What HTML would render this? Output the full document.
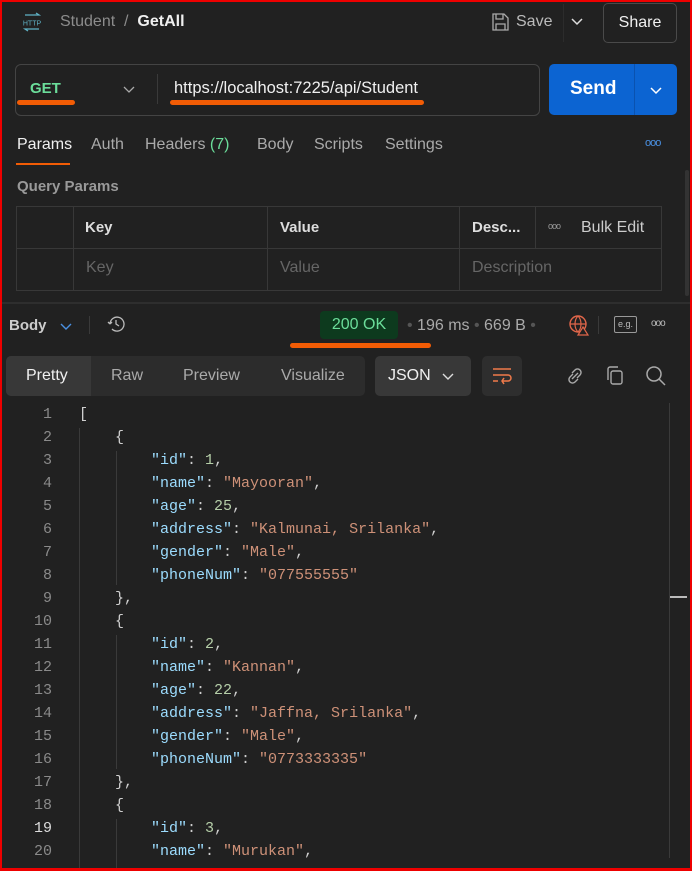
<!DOCTYPE html>
<html><head><meta charset="utf-8"><style>
*{box-sizing:border-box;margin:0;padding:0}
body{width:692px;height:871px;background:#212121;overflow:hidden;position:relative;font-family:"Liberation Sans",sans-serif;color:#e6e6e6}
.frame{position:absolute;inset:0;border:2px solid #e00;border-bottom-width:3px;z-index:10;pointer-events:none}
.a{position:absolute;white-space:nowrap}
.t{font-size:16px}
.code{position:absolute;left:0;top:403px;font-family:"Liberation Mono",monospace;font-size:15px;line-height:23px}
.ln{position:absolute;left:0;width:52px;text-align:right;color:#8a8a8a}
.cl{position:absolute;left:79px;white-space:pre;color:#cfcfcf}
.k{color:#9cdcfe}.s{color:#ce9178}.n{color:#b5cea8}
</style></head><body>
<div class="frame"></div>
<div class="a" style="left:21px;top:12px;width:22px;height:20px">
<svg width="22" height="20"><path d="M4 3h14l-3-2M18 17H4l3 2" stroke="#5fb3c6" fill="none" stroke-width="1.3"/><text x="11" y="13.5" font-size="7" fill="#5fb3c6" text-anchor="middle" font-family="Liberation Sans">HTTP</text></svg></div>
<div class="a" style="left:60px;top:13px;color:#8c8c8c;font-size:16px">Student&nbsp; /&nbsp; <b style="color:#f0f0f0">GetAll</b></div>
<div class="a" style="left:490px;top:12px"><svg width="20" height="20"><path d="M3 2h11l4 4v12H3z M6 2v5h7V2 M6 18v-6h9v6" stroke="#aaa" fill="none" stroke-width="1.3"/></svg></div>
<div class="a t" style="left:516px;top:13px;color:#bbb">Save</div>
<div class="a" style="left:563px;top:4px;width:1px;height:38px;background:#2c2c2c"></div>
<div class="a" style="left:570px;top:13px"><svg width="14" height="10"><path d="M2 3l5 5 5-5" stroke="#ddd" fill="none" stroke-width="1.5"/></svg></div>
<div class="a" style="left:603px;top:3px;width:74px;height:40px;border:1px solid #4a4a4a;border-radius:5px;text-align:center;line-height:38px;font-size:16px;color:#f0f0f0">Share</div>
<div class="a" style="left:15px;top:64px;width:525px;height:52px;border:1px solid #444;border-radius:6px"></div>
<div class="a" style="left:30px;top:80px;color:#6bdd9a;font-weight:bold;font-size:15px">GET</div>
<div class="a" style="left:17px;top:100px;width:58px;height:5px;background:#f25c05;border-radius:3px"></div>
<div class="a" style="left:122px;top:82px"><svg width="14" height="10"><path d="M2 2l5 5 5-5" stroke="#aaa" fill="none" stroke-width="1.3"/></svg></div>
<div class="a" style="left:157px;top:74px;width:1px;height:30px;background:#3a3a3a"></div>
<div class="a" style="left:174px;top:79px;font-size:16.5px;color:#f0f0f0">https://localhost:7225/api/Student</div>
<div class="a" style="left:170px;top:100px;width:254px;height:5px;background:#f25c05;border-radius:3px"></div>
<div class="a" style="left:549px;top:64px;width:128px;height:51px;background:#0c64d2;border-radius:5px"></div>
<div class="a" style="left:634px;top:64px;width:1px;height:51px;background:#0a52b0"></div>
<div class="a" style="left:570px;top:78px;font-size:19px;font-weight:bold;color:#fff">Send</div>
<div class="a" style="left:649px;top:83px"><svg width="14" height="10"><path d="M2 2l5 5 5-5" stroke="#fff" fill="none" stroke-width="1.5"/></svg></div>
<div class="a t" style="left:17px;top:136px;color:#f0f0f0">Params</div>
<div class="a" style="left:16px;top:163px;width:54px;height:2px;background:#f25c05"></div>
<div class="a t" style="left:91px;top:136px;color:#aaa">Auth</div>
<div class="a t" style="left:145px;top:136px;color:#aaa">Headers <span style="color:#6bdd9a">(7)</span></div>
<div class="a t" style="left:257px;top:136px;color:#aaa">Body</div>
<div class="a t" style="left:314px;top:136px;color:#aaa">Scripts</div>
<div class="a t" style="left:385px;top:136px;color:#aaa">Settings</div>
<div class="a" style="left:645px;top:137px;color:#4a90e2;font-size:11px;letter-spacing:-1px">ooo</div>
<div class="a" style="left:17px;top:178px;font-size:15px;font-weight:bold;color:#999">Query Params</div>
<div class="a" style="left:16px;top:206px;width:646px;height:85px;border:1px solid #383838"></div>
<div class="a" style="left:16px;top:248px;width:646px;height:1px;background:#383838"></div>
<div class="a" style="left:73px;top:206px;width:1px;height:85px;background:#383838"></div>
<div class="a" style="left:267px;top:206px;width:1px;height:85px;background:#383838"></div>
<div class="a" style="left:459px;top:206px;width:1px;height:85px;background:#383838"></div>
<div class="a" style="left:535px;top:206px;width:1px;height:42px;background:#383838"></div>
<div class="a" style="left:85px;top:219px;font-size:15px;font-weight:bold;color:#ddd">Key</div>
<div class="a" style="left:280px;top:219px;font-size:15px;font-weight:bold;color:#ddd">Value</div>
<div class="a" style="left:472px;top:219px;font-size:15px;font-weight:bold;color:#ddd">Desc...</div>
<div class="a" style="left:548px;top:221px;font-size:9px;color:#999;letter-spacing:-1px">ooo</div>
<div class="a t" style="left:581px;top:219px;color:#ccc">Bulk Edit</div>
<div class="a t" style="left:86px;top:259px;color:#666">Key</div>
<div class="a t" style="left:280px;top:259px;color:#666">Value</div>
<div class="a t" style="left:472px;top:259px;color:#666">Description</div>
<div class="a" style="left:685px;top:170px;width:4px;height:126px;background:#333;border-radius:2px"></div>
<div class="a" style="left:0;top:302px;width:692px;height:2px;background:#2e2e2e"></div>
<div class="a" style="left:9px;top:317px;font-size:15px;font-weight:bold;color:#ccc">Body</div>
<div class="a" style="left:59px;top:319px"><svg width="14" height="10"><path d="M2 2l5 5 5-5" stroke="#4a90e2" fill="none" stroke-width="1.4"/></svg></div>
<div class="a" style="left:89px;top:316px;width:1px;height:18px;background:#3a3a3a"></div>
<div class="a" style="left:106px;top:314px"><svg width="20" height="20"><path d="M4 10a7 7 0 1 1 2 5M4 10l-2-2M4 10l2-2M10 6v4l3 2" stroke="#bbb" fill="none" stroke-width="1.3"/></svg></div>
<div class="a" style="left:320px;top:311px;width:78px;height:28px;background:#0d3a1e;border-radius:4px;text-align:center;line-height:28px;font-size:16px;color:#6bdd9a">200 OK</div>
<div class="a" style="left:290px;top:343px;width:141px;height:5px;background:#f25c05;border-radius:3px"></div>
<div class="a t" style="left:407px;top:317px;color:#aaa"><span style="color:#555">•</span> 196 ms <span style="color:#555">•</span> 669 B <span style="color:#555">•</span></div>
<div class="a" style="left:568px;top:314px"><svg width="22" height="22"><circle cx="10" cy="10" r="8" stroke="#e0664a" fill="none" stroke-width="1.4"/><path d="M2 10h16M10 2c-4 4-4 12 0 16M10 2c4 4 4 12 0 16" stroke="#e0664a" fill="none" stroke-width="1.2"/><path d="M15 13l5 8h-10z" fill="#212121" stroke="#e0664a" stroke-width="1.2"/></svg></div>
<div class="a" style="left:598px;top:316px;width:1px;height:18px;background:#3a3a3a"></div>
<div class="a" style="left:614px;top:316px;width:23px;height:17px;border:1px solid #999;border-radius:2px;font-size:9px;color:#bbb;text-align:center;line-height:15px">e.g.</div>
<div class="a" style="left:651px;top:318px;font-size:10px;color:#bbb;letter-spacing:-1px">ooo</div>
<div class="a" style="left:6px;top:356px;width:359px;height:40px;background:#2c2c2c;border-radius:5px"></div>
<div class="a" style="left:6px;top:356px;width:85px;height:40px;background:#383838;border-radius:5px 0 0 5px"></div>
<div class="a t" style="left:26px;top:367px;color:#f0f0f0">Pretty</div>
<div class="a t" style="left:111px;top:367px;color:#aaa">Raw</div>
<div class="a t" style="left:183px;top:367px;color:#aaa">Preview</div>
<div class="a t" style="left:281px;top:367px;color:#aaa">Visualize</div>
<div class="a" style="left:375px;top:356px;width:96px;height:40px;background:#383838;border-radius:5px"></div>
<div class="a t" style="left:388px;top:367px;color:#f0f0f0">JSON</div>
<div class="a" style="left:441px;top:369px"><svg width="14" height="10"><path d="M2 2l5 5 5-5" stroke="#ddd" fill="none" stroke-width="1.4"/></svg></div>
<div class="a" style="left:482px;top:356px;width:40px;height:40px;background:#2e2e2e;border-radius:5px"></div>
<div class="a" style="left:491px;top:366px"><svg width="22" height="20"><path d="M2 3h18M2 9h15a3 3 0 0 1 0 6h-6M13 12l-2 3 2 3M2 15h5" stroke="#f07a4a" fill="none" stroke-width="1.5"/></svg></div>
<div class="a" style="left:564px;top:365px"><svg width="22" height="22"><path d="M8 14l6-6M9 9l-3 3a3.5 3.5 0 0 0 5 5l3-3M13 13l3-3a3.5 3.5 0 0 0-5-5l-3 3" stroke="#aaa" fill="none" stroke-width="1.4"/></svg></div>
<div class="a" style="left:605px;top:365px"><svg width="22" height="22"><rect x="6" y="6" width="11" height="13" rx="2" stroke="#aaa" fill="none" stroke-width="1.4"/><path d="M3 15V4a2 2 0 0 1 2-2h8" stroke="#aaa" fill="none" stroke-width="1.4"/></svg></div>
<div class="a" style="left:645px;top:365px"><svg width="22" height="22"><circle cx="9" cy="9" r="7" stroke="#aaa" fill="none" stroke-width="1.5"/><path d="M14 14l6 6" stroke="#aaa" stroke-width="1.5"/></svg></div>
<div class="a" style="left:669px;top:403px;width:1px;height:455px;background:#3a3a3a"></div>
<div class="a" style="left:670px;top:596px;width:17px;height:2px;background:#bbb"></div>
<div class="a" style="left:79px;top:428px;width:1px;height:440px;background:#3a3a3a"></div>
<div class="a" style="left:116px;top:451px;width:1px;height:134px;background:#3a3a3a"></div>
<div class="a" style="left:116px;top:635px;width:1px;height:134px;background:#3a3a3a"></div>
<div class="a" style="left:116px;top:819px;width:1px;height:50px;background:#3a3a3a"></div>
<div class="code">
<div class="ln" style="top:0">1</div><div class="cl" style="top:0">[</div>
<div class="ln" style="top:23px">2</div><div class="cl" style="top:23px">    {</div>
<div class="ln" style="top:46px">3</div><div class="cl" style="top:46px">        <span class="k">"id"</span>: <span class="n">1</span>,</div>
<div class="ln" style="top:69px">4</div><div class="cl" style="top:69px">        <span class="k">"name"</span>: <span class="s">"Mayooran"</span>,</div>
<div class="ln" style="top:92px">5</div><div class="cl" style="top:92px">        <span class="k">"age"</span>: <span class="n">25</span>,</div>
<div class="ln" style="top:115px">6</div><div class="cl" style="top:115px">        <span class="k">"address"</span>: <span class="s">"Kalmunai, Srilanka"</span>,</div>
<div class="ln" style="top:138px">7</div><div class="cl" style="top:138px">        <span class="k">"gender"</span>: <span class="s">"Male"</span>,</div>
<div class="ln" style="top:161px">8</div><div class="cl" style="top:161px">        <span class="k">"phoneNum"</span>: <span class="s">"077555555"</span></div>
<div class="ln" style="top:184px">9</div><div class="cl" style="top:184px">    },</div>
<div class="ln" style="top:207px">10</div><div class="cl" style="top:207px">    {</div>
<div class="ln" style="top:230px">11</div><div class="cl" style="top:230px">        <span class="k">"id"</span>: <span class="n">2</span>,</div>
<div class="ln" style="top:253px">12</div><div class="cl" style="top:253px">        <span class="k">"name"</span>: <span class="s">"Kannan"</span>,</div>
<div class="ln" style="top:276px">13</div><div class="cl" style="top:276px">        <span class="k">"age"</span>: <span class="n">22</span>,</div>
<div class="ln" style="top:299px">14</div><div class="cl" style="top:299px">        <span class="k">"address"</span>: <span class="s">"Jaffna, Srilanka"</span>,</div>
<div class="ln" style="top:322px">15</div><div class="cl" style="top:322px">        <span class="k">"gender"</span>: <span class="s">"Male"</span>,</div>
<div class="ln" style="top:345px">16</div><div class="cl" style="top:345px">        <span class="k">"phoneNum"</span>: <span class="s">"0773333335"</span></div>
<div class="ln" style="top:368px">17</div><div class="cl" style="top:368px">    },</div>
<div class="ln" style="top:391px">18</div><div class="cl" style="top:391px">    {</div>
<div class="ln" style="top:414px;color:#ddd">19</div><div class="cl" style="top:414px">        <span class="k">"id"</span>: <span class="n">3</span>,</div>
<div class="ln" style="top:437px">20</div><div class="cl" style="top:437px">        <span class="k">"name"</span>: <span class="s">"Murukan"</span>,</div>
</div>
</body></html>
